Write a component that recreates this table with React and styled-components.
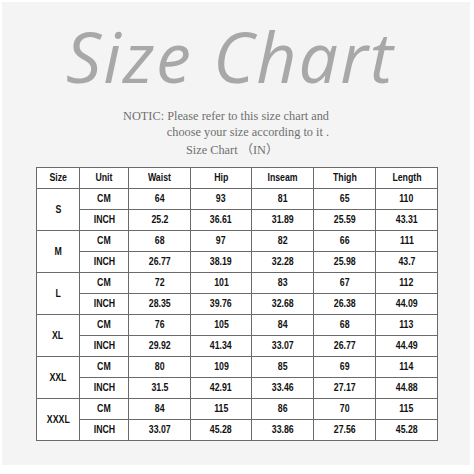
import React from "react";
import styled, { createGlobalStyle } from "styled-components";

const Global = createGlobalStyle`
  html, body { margin: 0; padding: 0; background: #ffffff; }
  #root { width: 474px; height: 474px; }
`;

const Page = styled.div`
  width: 474px;
  height: 474px;
  box-sizing: border-box;
  padding: 2px 4px 9px 2px;
  background: #ffffff;
`;

const Panel = styled.div`
  height: 100%;
  background: #f4f4f4;
  display: flex;
  flex-direction: column;
`;

const Title = styled.h1`
  margin: 0;
  padding: 19px 0 0 64px;
  height: 90px;
  box-sizing: border-box;
  font-family: "Open Sans", "DejaVu Sans", sans-serif;
  font-style: italic;
  font-weight: 400;
  font-size: 70px;
  line-height: 70px;
  color: #a8a8a8;
  letter-spacing: 2px;
  white-space: nowrap;
`;

const Notice = styled.div`
  margin: 16px 0 0 119px;
  width: 208px;
  text-align: right;
  font-family: "Liberation Serif", "Times New Roman", serif;
  font-size: 12.3px;
  line-height: 16px;
  color: #6f6f6f;
  white-space: nowrap;
`;

const UnitLine = styled.div`
  margin: 2px 0 0 184px;
  font-family: "Liberation Serif", "Noto Sans CJK SC", serif;
  font-size: 12.3px;
  line-height: 16px;
  color: #6f6f6f;
  white-space: pre;
`;

const Table = styled.table`
  margin: 9px 0 0 34px;
  border-collapse: collapse;
  table-layout: fixed;
  width: 402px;
  background: #ffffff;
  font-family: "Liberation Sans", Arial, sans-serif;
  font-weight: bold;
  font-size: 10.2px;
  color: #111111;
  border: 1.5px solid #7a7a7a;
`;

const HeadRow = styled.tr`
  height: 21px;
`;

const Row = styled.tr`
  height: 21px;
`;

const Cell = styled.td`
  border: 1px solid #6a6a6a;
  text-align: center;
  vertical-align: middle;
  padding: 0;
  line-height: 12px;
`;

const Narrow = styled.span`
  display: inline-block;
  transform: scaleX(0.86);
`;

const sizes = [
  { size: "S", cm: ["64", "93", "81", "65", "110"], inch: ["25.2", "36.61", "31.89", "25.59", "43.31"] },
  { size: "M", cm: ["68", "97", "82", "66", "111"], inch: ["26.77", "38.19", "32.28", "25.98", "43.7"] },
  { size: "L", cm: ["72", "101", "83", "67", "112"], inch: ["28.35", "39.76", "32.68", "26.38", "44.09"] },
  { size: "XL", cm: ["76", "105", "84", "68", "113"], inch: ["29.92", "41.34", "33.07", "26.77", "44.49"] },
  { size: "XXL", cm: ["80", "109", "85", "69", "114"], inch: ["31.5", "42.91", "33.46", "27.17", "44.88"] },
  { size: "XXXL", cm: ["84", "115", "86", "70", "115"], inch: ["33.07", "45.28", "33.86", "27.56", "45.28"] },
];

const headers = ["Size", "Unit", "Waist", "Hip", "Inseam", "Thigh", "Length"];
const widths = [43, 49, 62, 61, 62, 62, 62];

const T = ({ children, ...rest }) => (
  <Cell {...rest}>
    <Narrow>{children}</Narrow>
  </Cell>
);

export default function App() {
  return (
    <>
      <Global />
      <Page>
        <Panel>
          <Title>Size Chart</Title>
          <Notice>
            NOTIC: Please refer to this size chart and
            <br />
            choose your size according to it .
          </Notice>
          <UnitLine>{"Size Chart \uFF08IN\uFF09"}</UnitLine>
          <Table>
            <colgroup>
              {widths.map((w, i) => (
                <col key={i} style={{ width: w }} />
              ))}
            </colgroup>
            <tbody>
              <HeadRow>
                {headers.map((h) => (
                  <T key={h}>{h}</T>
                ))}
              </HeadRow>
              {sizes.map((s) => (
                <React.Fragment key={s.size}>
                  <Row>
                    <T rowSpan={2}>{s.size}</T>
                    <T>CM</T>
                    {s.cm.map((v, i) => (
                      <T key={i}>{v}</T>
                    ))}
                  </Row>
                  <Row>
                    <T>INCH</T>
                    {s.inch.map((v, i) => (
                      <T key={i}>{v}</T>
                    ))}
                  </Row>
                </React.Fragment>
              ))}
            </tbody>
          </Table>
        </Panel>
      </Page>
    </>
  );
}
